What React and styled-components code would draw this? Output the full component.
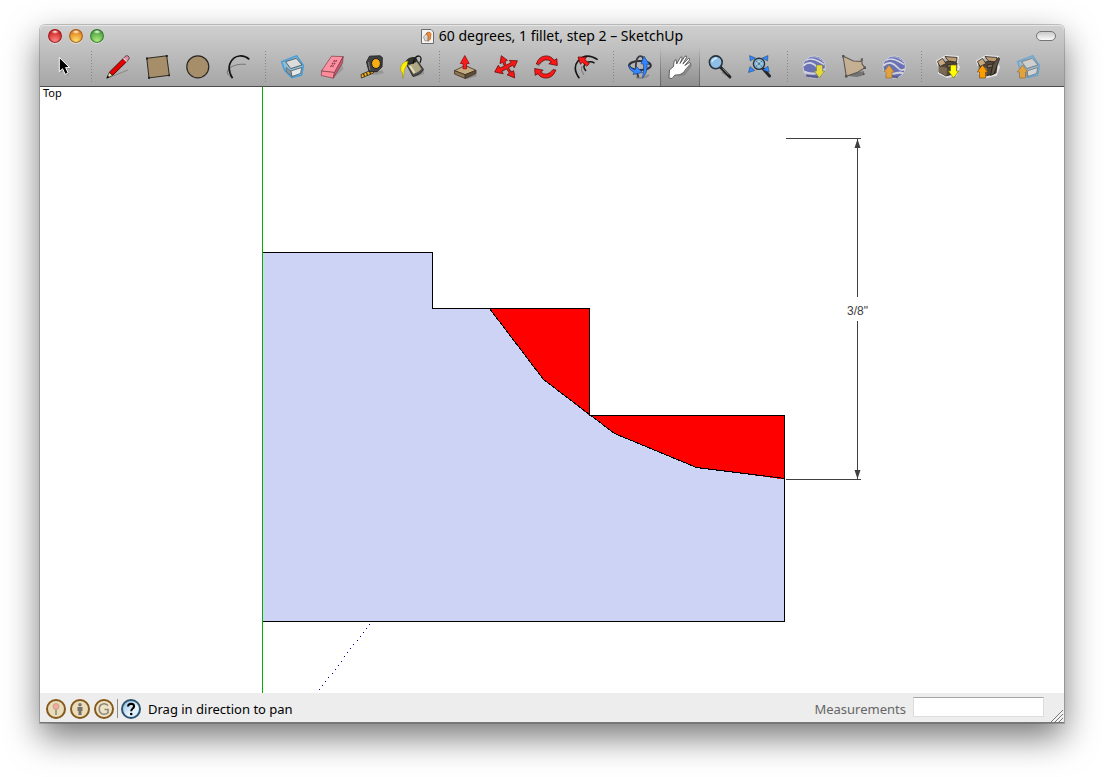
import React, { useState } from "react";
import styled, { createGlobalStyle } from "styled-components";

//icons, all of them on a 24x24 grid
const House = () => (
  <>
    <path d="M1.7 6.7L16.7 .8L23.4 10.5L21.6 20L11.7 22.6L4.5 15Z" fill="#8fbdd8" stroke="#4a9fd8" strokeWidth="1.6" />
    <path d="M10.8 16L21.8 12.5L20.5 18.5L12 21.5Z" fill="#e6e8e8" stroke="#4b5961" strokeWidth=".8" />
    <path d="M6 12.5L10.8 16L12 21.5L6.500 17Z" fill="#8b979d" stroke="#4b5961" strokeWidth=".6" />
    <path d="M5.5 6.7L16.3 3.3L22 10L10.8 13.6Z" fill="#dcdcdc" stroke="#4b5961" strokeWidth=".9" />
  </>
);

const Globe = () => (
  <>
    <circle cx="12.2" cy="12" r="11.2" fill="#4450b4" stroke="#e2e4f2" strokeWidth="1" />
    <path d="M4 5.5C9 1.5 16 6 22 9.5" stroke="#e6e8f2" strokeWidth="1.5" fill="none" />
    <path d="M9 1.8C14 1.3 19 4 22 7.5" stroke="#b9bfe0" strokeWidth="1" fill="none" />
    <path d="M1.6 10.5C7 5.5 12 8.5 15 12S20 16 23 14" stroke="#eaebf2" strokeWidth="1.8" fill="none" />
    <path d="M1.8 16.5C7 19 11 19 15 18S20 18 21 18.5" stroke="#e4e6f0" strokeWidth="2.2" fill="none" />
    <path d="M4 20.5C8 22 13 21 16 22.5" stroke="#2b2e7c" strokeWidth="1.8" fill="none" />
  </>
);

const Carton = () => (
  <>
    <path d="M1 6L10 1L22 2L21 9L23 12L20 20L11 22L3 18L3 12Z" fill="none" stroke="#e4e4e4" strokeWidth="2" />
    <path d="M3 9L13 6L21 8L20 18L10 21L3 17Z" fill="#514639" stroke="#25211c" strokeWidth=".8" />
    <path d="M3 11L11 13L10.5 21L3 17Z" fill="#7a6a51" />
    <path d="M1.5 6.5L6.5 3.5L10 8.5L4 11.5Z" fill="#c6a77e" stroke="#2a2520" strokeWidth=".8" />
    <path d="M9 1.5L21 2.5L20.5 7L12.5 6Z" fill="#bd9b70" stroke="#2a2520" strokeWidth=".8" />
    <path d="M11 10L18 9L19 11L12 13Z" fill="#857056" stroke="#2a2520" strokeWidth=".8" />
  </>
);

const ArrowDown = ({ x, fill }) => (
  <path transform={`translate(${x} 0)`} d="M-3 10H3V16H5.2L0 23L-5.2 16H-3Z" fill={fill} stroke="#6f661c" strokeWidth=".7" />
);

const ArrowUp = ({ x, fill }) => (
  <path transform={`translate(${x} 0)`} d="M-3 23H3V17H5.2L0 10L-5.2 17H-3Z" fill={fill} stroke="#7a5218" strokeWidth=".7" />
);

const icons = {
  select: (
    <>
      <path d="M8.5 4V18L12 15L14.5 20.5L17.5 19L15 14.2H19Z" fill="#777" opacity=".6" />
      <path d="M7.3 2.5V16.6L10.6 13.8L13.2 19.4L16.2 18L13.6 12.6H17.6Z" fill="#000" stroke="#fff" strokeWidth="1" />
    </>
  ),
  line: (
    <>
      <path d="M2 23L22 15" stroke="#8d8584" strokeWidth="1" />
      <path d="M3.2 17.4L17.5 3.2L20.8 6.5L6.6 20.4Z" fill="#e60000" stroke="#3b0a0a" strokeWidth=".9" />
      <path d="M3.2 17.4L6.6 20.4L.8 23.2Z" fill="#f0dca0" stroke="#222" strokeWidth=".7" />
      <path d="M.6 23.4L1.6 20.6L3.4 22.2Z" fill="#000" />
      <path d="M17.5 3.2L20 .8Q22 .3 23 2Q23.5 3.4 23 4L20.8 6.5Z" fill="#e58ca5" stroke="#4a2c35" strokeWidth=".8" />
      <path d="M17.5 3.2L20.8 6.5" stroke="#ddd" strokeWidth="1.4" />
    </>
  ),
  rectangle: (
    <>
      <path d="M.8 3.3L20.7 .8L23.3 20.3L3 22.9Z" fill="#a68e6b" stroke="#2e2a24" strokeWidth="1" />
      <path d="M0 2.4h2v2h-2zM19.8 0h2v2h-2zM22.2 19.4h1.8v1.8h-1.8zM2 21.8h2v2h-2z" fill="#222" />
    </>
  ),
  circle: <circle cx="11.8" cy="11.8" r="11" fill="#a68e6b" stroke="#2b2824" strokeWidth="1.2" />,
  arc: (
    <>
      <path d="M5 22Q-1.5 18 3 13.5Q9 8.5 20 9.3" fill="none" stroke="#777" strokeWidth="1" />
      <path d="M6.5 23.3Q1.5 15 4 8.5Q7 1.5 13.5 1Q19 .5 23.3 4.3" fill="none" stroke="#161616" strokeWidth="1.7" />
    </>
  ),
  component: <House />,
  eraser: (
    <>
      <path d="M13 23.5L23.5 14L22 9Z" fill="#909090" opacity=".7" />
      <path d="M1.5 16L11.5 1.2L23.2 1.6L14.5 17.5Z" fill="#ff92a2" stroke="#7d3e49" strokeWidth=".7" />
      <path d="M1.5 16L14.5 17.5L13.3 23.2L1.3 20.5Z" fill="#ff8b9b" stroke="#7d3e49" strokeWidth=".7" />
      <path d="M14.5 17.5L23.2 1.6L22.5 8L13.3 23.2Z" fill="#c95a6d" stroke="#7d3e49" strokeWidth=".7" />
      <path d="M10.5 12L15 4.5M12.5 12L17 4.5" stroke="#8d3c4c" strokeWidth="1.2" strokeDasharray="2 1" />
    </>
  ),
  tape: (
    <>
      <path d="M8 19L22 15L24 18L16 20Z" fill="#8c8c8c" opacity=".7" />
      <path d="M13.5 14L1 19.5L1.5 23L13.5 18Z" fill="#f5b416" stroke="#2b2b2b" strokeWidth=".8" />
      <path d="M3.5 18.5L4.5 21.5M6.5 17.3L7.5 20.3M9.5 16L10.5 19" stroke="#33290a" strokeWidth="1.1" />
      <path d="M6.5 7L9.5 1.2L20 .8L22.3 2.5L22 12L17 16.7H9Z" fill="#404144" stroke="#1d1e20" strokeWidth=".9" />
      <path d="M8.5 7L10 15" stroke="#76787a" strokeWidth="1.2" />
      <ellipse cx="16" cy="8.5" rx="4.4" ry="5" fill="#f6ae14" stroke="#1a1a1a" strokeWidth="1" />
    </>
  ),
  paint: (
    <>
      <path d="M14 22L25 19L23 15Z" fill="#8a8a8a" opacity=".7" />
      <path d="M5.5 7.5L16 4L23.5 14.500Q21 19.500 13 21.5Z" fill="#4e4f4b" stroke="#222" strokeWidth=".9" />
      <path d="M8 10.5L17 7L21.500 14Q19 17 13.500 19Z" fill="#b0a883" />
      <path d="M10 11L14.5 18" stroke="#e4ddbd" strokeWidth="2" />
      <path d="M5.5 7.5Q7 3 13 2.500Q18 2.500 16 6Q10 10.500 5.5 7.5Z" fill="#34352e" stroke="#1c1c1c" strokeWidth=".8" />
      <path d="M13 9Q14 1 19 1Q22.5 2 20 8" stroke="#171717" strokeWidth="1.3" fill="none" />
      <path d="M8 6Q2.5 6.5 .8 12Q-.2 16 2.5 18L2.7 23.5L4.2 18.5Q3.8 15 5.500 12.5Q7.500 10 8 6Z" fill="#ffef00" stroke="#8b7f13" strokeWidth=".5" />
    </>
  ),
  pushpull: (
    <>
      <path d="M11 23L22.5 19.5V21L13 24Z" fill="#888" />
      <path d="M.5 15.7L11 10.5L22 15.3L11.2 19.7Z" fill="#c6aa80" stroke="#3d3226" strokeWidth=".8" />
      <path d="M.5 15.7L11.2 19.7V23.5L.5 19Z" fill="#8f7654" stroke="#3d3226" strokeWidth=".8" />
      <path d="M22 15.3L11.2 19.7V23.5L22 18.6Z" fill="#5e4c38" stroke="#3d3226" strokeWidth=".8" />
      <path d="M10.8 .5L15.2 8.5H12.6V13.8H9V8.5H6.3Z" fill="#ff1a1a" stroke="#7d0b0b" strokeWidth=".7" />
    </>
  ),
  move: (
    <>
      <path d="M9 9L21 20M5 18L20 9" stroke="#777" strokeWidth="2" opacity=".6" />
      <path d="M7.3 .7L13.4 5.3L10.8 6.5L12.2 10.2L17 7.6L15.4 5.4L23.4 5.8L20.2 12.8L18.8 10.2L14.3 12.6L17 17L19.7 15.8L20.7 22.9L13 19.8L15.4 18.2L12.6 13.8L7.7 16.3L9.3 18.8L.7 17L4.3 10.3L6 13L10.6 10.9L8.7 7.4L6 8.6Z" fill="#f91717" stroke="#6d0d0d" strokeWidth=".8" />
    </>
  ),
  rotate: (
    <>
      <path d="M4 11Q12 -1 21 8.5M22 15Q13 28 4 17" fill="none" stroke="#777" strokeWidth="2" opacity=".6" />
      <path d="M2.3 9Q5 1 12 .9Q17.5 1 20 5.3L22.8 3.7L23.3 10.5L14.8 8.8L17.5 7Q11 1.500 5 9.4Z" fill="#ff1717" stroke="#650e0e" strokeWidth=".8" />
      <path d="M21.7 15Q19 23 12 23.1Q6.5 23 4 18.7L1.2 20.3L.7 13.5L9.2 15.2L6.5 17Q13 22.500 19 14.6Z" fill="#ff1717" stroke="#650e0e" strokeWidth=".8" />
    </>
  ),
  offset: (
    <>
      <path d="M5.3 23.3Q-2 13 4 6Q12 -3 23.7 4.7" fill="none" stroke="#151515" strokeWidth="1.6" />
      <path d="M12 16Q7.5 11 12.5 8Q16 5.5 20.5 8" fill="none" stroke="#151515" strokeWidth="1.5" />
      <path d="M10 20Q6 15 8 11" fill="none" stroke="#777" strokeWidth="1" />
      <path d="M4 2L12.5 2.3L10.8 4.5L15.3 8.5L12.8 11.2L8.3 7.2L6.5 9.3Z" fill="#ff1717" stroke="#650e0e" strokeWidth=".8" />
    </>
  ),
  orbit: (
    <>
      <path d="M8 22Q14 25 21 20" stroke="#8b8b8b" strokeWidth="2" fill="none" />
      <ellipse cx="12" cy="10.5" rx="10.8" ry="4.6" fill="none" stroke="#303236" strokeWidth="2" />
      <path d="M10.5 22.5Q6 12 9 4Q11 0 14 1.5Q15.5 3 15.5 7" fill="none" stroke="#3a3c40" strokeWidth="1.8" />
      <path d="M1 9Q1.5 13 7 14.8L8.5 11.5L14.5 17.5L5 19.5L6 17.2Q0 15 1 9Z" fill="#3386ff" stroke="#173b79" strokeWidth=".6" />
      <path d="M16 1L21.3 9.5L19 9.3Q19.8 18 14.5 22.8Q16 17 15.5 9L13 8.8Z" fill="#3386ff" stroke="#173b79" strokeWidth=".6" />
    </>
  ),
  pan: (
    <>
      <path d="M9 22L18 16L23 8L24 11L17 20Z" fill="#777" opacity=".6" />
      <path d="M1 23L1.5 15L5.5 11.5L6.2 6L8 4.5L8.7 9L12.5 2.3Q14.5 1 14 3.5L12 8.5L17 1.2Q19 .3 18.4 2.5L14.8 9L20.4 3.5Q22.3 3 21.3 5.2L16.8 10.5L21.3 7.6Q23.3 7.5 22 9.5Q18 13.5 15.5 17.5Q12.5 20.5 7 20L4 23.5Z" fill="#fff" stroke="#333" strokeWidth=".7" />
    </>
  ),
  zoom: (
    <>
      <path d="M14 17L23 23" stroke="#858585" strokeWidth="2" />
      <path d="M12.3 12L21.8 21.8" stroke="#202326" strokeWidth="3" strokeLinecap="round" />
      <path d="M14.5 13.5L20.5 19.5" stroke="#777b7d" strokeWidth="1" />
      <circle cx="7.8" cy="7.3" r="6.4" fill="#8fbfe6" stroke="#28323c" strokeWidth="1.6" />
      <path d="M3.8 7Q5 3.5 9 3.3" fill="none" stroke="#d9edfa" strokeWidth="1.5" />
    </>
  ),
  extents: (
    <>
      <path d="M15 13.5L21.5 21" stroke="#24272b" strokeWidth="3" strokeLinecap="round" />
      <circle cx="11" cy="8.8" r="5.6" fill="#8bb8d5" stroke="#28323c" strokeWidth="1.4" />
      <path d="M8 6L14 11.5M14 6L8 11.5" stroke="#3f6f91" strokeWidth="1" />
      <path d="M8 8.7L11 6L14 8.7L11 11.5Z" fill="none" stroke="#c6e4f4" strokeWidth=".7" />
      <path d="M1.6 .6L7.4 3L2.2 6ZM20 .6L14.3 3L19.5 6ZM.5 17.5L2 11.5L6.8 15.5ZM21.2 17.2L20 11.2L15 14.8Z" fill="#3188ff" stroke="#174077" strokeWidth=".5" />
    </>
  ),
  location: (
    <>
      <Globe />
      <ArrowDown x={17.5} fill="#fff100" />
    </>
  ),
  terrain: (
    <>
      <path d="M6 21L13 18L22 16V20L15 22Z" fill="#555" />
      <path d="M1 1L11.3 6L18.5 6.5L20 4.5L20 9L23 12.7L15.7 17.3L4.3 21.3Z" fill="#d0ae82" stroke="#2c2720" strokeWidth="1.1" />
      <path d="M0 0h2.5v2.5h-2.5zM3 20h2.5v2.5h-2.5zM21.5 11.5h2.5v2.5h-2.5zM18.8 3.5h2v2h-2zM21 18h1.5v2h-1.5z" fill="#2c2720" />
    </>
  ),
  upload: (
    <>
      <Globe />
      <ArrowUp x={7} fill="#ff9c00" />
    </>
  ),
  getModels: (
    <>
      <Carton />
      <ArrowDown x={17.5} fill="#ffff00" />
    </>
  ),
  shareModel: (
    <>
      <Carton />
      <path d="M17 9L22.5 2.5L23.5 4L18 19L14.5 20.5Z" fill="#5e5240" stroke="#211d18" strokeWidth=".8" />
      <ArrowUp x={6.5} fill="#ff9c00" />
    </>
  ),
  shareComponent: (
    <>
      <House />
      <ArrowUp x={6.5} fill="#ff9c00" />
    </>
  ),
};

//toolbar groups, every group after the first one starts with a separator
const groups = [
  [{ id: "select", label: "Select" }],
  [
    { id: "line", label: "Line" },
    { id: "rectangle", label: "Rectangle" },
    { id: "circle", label: "Circle" },
    { id: "arc", label: "Arc" },
  ],
  [
    { id: "component", label: "Make Component" },
    { id: "eraser", label: "Eraser" },
    { id: "tape", label: "Tape Measure" },
    { id: "paint", label: "Paint Bucket" },
  ],
  [
    { id: "pushpull", label: "Push/Pull" },
    { id: "move", label: "Move" },
    { id: "rotate", label: "Rotate" },
    { id: "offset", label: "Offset" },
  ],
  [
    { id: "orbit", label: "Orbit" },
    { id: "pan", label: "Pan" },
    { id: "zoom", label: "Zoom" },
    { id: "extents", label: "Zoom Extents" },
  ],
  [
    { id: "location", label: "Add Location", dimmed: true },
    { id: "terrain", label: "Toggle Terrain", dimmed: true },
    { id: "upload", label: "Preview in Google Earth", dimmed: true },
  ],
  [
    { id: "getModels", label: "Get Models" },
    { id: "shareModel", label: "Share Model" },
    { id: "shareComponent", label: "Share Component", dimmed: true },
  ],
];

//guide line, one dot per step
const dots = Array.from({ length: 17 }, (_, i) => ({
  x: Math.round(369 - i * 3.12),
  y: Math.round(624 + i * 4.06),
}));

const Drawing = () => (
  <Sheet viewBox="40 87 1024 606" preserveAspectRatio="xMinYMin meet">
    <g shapeRendering="crispEdges">
      <path d="M262.5 252.5H432.5V308.5H489.5L543.5 379.5L590.5 415.5L614.5 433.5L696.5 467.5L784.5 479.5V621.5H262.5Z" fill="#ccd3f5" />
      <path d="M489.5 308.5H589.5V415.5L543.5 379.5Z" fill="#f00" />
      <path d="M590.5 415.5H784.5V479.5L696.5 467.5L614.5 433.5Z" fill="#f00" />
      <path d="M489.5 308.5L543.5 379.5L614.5 433.5L696.5 467.5L784.5 478.5" fill="none" stroke="#000" />
      <path d="M262.5 252.5H432.5V308.5H589.5V415.5H784.5V621.5H262.5" fill="none" stroke="#000" />
      <path d="M262.5 87V693" stroke="#00b000" />
      {dots.map(({ x, y }) => (
        <rect key={y} x={x} y={y} width="1" height="1" fill="#00008c" />
      ))}
      <g fill="none" stroke="#404040">
        <path d="M786 138.5H861M786 479.5H861" />
        <path d="M857.5 139V297M857.5 321V479" />
      </g>
    </g>
    <path d="M857.5 139L860.5 148H854.5ZM857.5 479L860.5 470H854.5Z" fill="#404040" />
    <DimensionText x="857.5" y="315">
      3/8"
    </DimensionText>
  </Sheet>
);

const App = () => {
  //state
  const [tool, setTool] = useState("pan");
  const [measure, setMeasure] = useState("");
  return (
    <Desktop>
      <GlobalStyle />
      <Window>
        <Header>
          <TitleBar>
            <Lights>
              <Light type="button" aria-label="Close" $edge="#8f1a1a" $from="#c9181b" $to="#ff8f8a" />
              <Light type="button" aria-label="Minimize" $edge="#98571a" $from="#de7413" $to="#ffe873" />
              <Light type="button" aria-label="Zoom window" $edge="#32702a" $from="#3f9a35" $to="#b5f085" />
            </Lights>
            <Title>
              <svg width="13" height="15" viewBox="0 0 13 15" aria-hidden="true">
                <path d="M.5 .5H10L12.5 3V14.5H.5Z" fill="#f4f4f2" stroke="#6b6b6b" />
                <path d="M2.5 8L6.5 3L7 11.5L4 12Z" fill="#d8d8d8" stroke="#777" strokeWidth=".6" />
                <path d="M5 5Q8 1.5 10 4.5L9.5 10L7 12.5L7.5 7Z" fill="#ef8a35" stroke="#a8541a" strokeWidth=".6" />
              </svg>
              60 degrees, 1 fillet, step 2 – SketchUp
            </Title>
            <Pill type="button" aria-label="Toggle toolbar" />
          </TitleBar>
          <Toolbar>
            {groups.map((group, index) => (
              <Group key={index}>
                {group.map(({ id, label, dimmed }) => (
                  <Tool
                    type="button"
                    key={id}
                    aria-label={label}
                    $active={tool === id}
                    $dimmed={dimmed}
                    onClick={() => setTool(id)}
                  >
                    <svg width="24" height="24" viewBox="0 0 24 24" fill="none">
                      {icons[id]}
                    </svg>
                  </Tool>
                ))}
              </Group>
            ))}
          </Toolbar>
        </Header>
        <Canvas>
          <ViewName>Top</ViewName>
          <Drawing />
        </Canvas>
        <StatusBar>
          <Badge type="button" aria-label="Geo-location">
            <svg width="20" height="20" viewBox="0 0 20 20">
              <circle cx="10" cy="10" r="9" fill="#e9dcb9" stroke="#85591b" strokeWidth="2" />
              <path d="M10 9V16" stroke="#8d8878" strokeWidth="1.5" />
              <circle cx="10" cy="7.5" r="3" fill="#f3aa9c" stroke="#b5958a" strokeWidth=".7" />
            </svg>
          </Badge>
          <Badge type="button" aria-label="Claim credit">
            <svg width="20" height="20" viewBox="0 0 20 20">
              <circle cx="10" cy="10" r="9" fill="#e9dcb9" stroke="#85591b" strokeWidth="2" />
              <circle cx="10" cy="5.8" r="1.7" fill="#77736a" />
              <path d="M7.5 8H12.5V12H11.5V16H8.5V12H7.5Z" fill="#77736a" />
            </svg>
          </Badge>
          <Badge type="button" aria-label="Sign in">
            <svg width="20" height="20" viewBox="0 0 20 20">
              <circle cx="10" cy="10" r="9" fill="#eee3c6" stroke="#85591b" strokeWidth="2" />
              <path d="M14 6.5Q12 4.5 9.8 4.7Q5.2 5.3 5.2 10Q5.5 15 10 15.3Q12.5 15.3 14 13.8V10.5H10.5" fill="none" stroke="#8b8779" strokeWidth="1.6" />
            </svg>
          </Badge>
          <Divider />
          <Badge type="button" aria-label="Help">
            <svg width="20" height="20" viewBox="0 0 20 20">
              <defs>
                <linearGradient id="help" x1="0" y1="0" x2="1" y2="1">
                  <stop offset="0" stopColor="#88b4da" />
                  <stop offset=".6" stopColor="#eaf6ff" />
                  <stop offset="1" stopColor="#c5e4f8" />
                </linearGradient>
              </defs>
              <circle cx="10" cy="10" r="9" fill="url(#help)" stroke="#2b5470" strokeWidth="2" />
              <path d="M7 7.5Q7.2 4.7 10.2 4.7Q13.2 4.9 13.1 7.5Q12.9 8.8 11.5 9.7Q10.2 10.6 10.2 12.3" fill="none" stroke="#000" strokeWidth="2" />
              <circle cx="10.2" cy="15" r="1.3" />
            </svg>
          </Badge>
          <Hint>Drag in direction to pan</Hint>
          <MeasureLabel htmlFor="measurements">Measurements</MeasureLabel>
          <MeasureInput
            id="measurements"
            type="text"
            value={measure}
            onChange={(e) => setMeasure(e.target.value)}
          />
          <Grip viewBox="0 0 12 12" aria-hidden="true">
            <path d="M0 12L12 0M4 12L12 4M8 12L12 8" stroke="#777" />
            <path d="M1.5 12L12 1.5M5.5 12L12 5.5M9.5 12L12 9.5" stroke="#fff" strokeWidth=".7" />
          </Grip>
        </StatusBar>
      </Window>
    </Desktop>
  );
};

const GlobalStyle = createGlobalStyle`
  * {
    box-sizing: border-box;
  }
  body {
    margin: 0;
    background: #fff;
    font-family: "Lucida Grande", "Noto Sans", sans-serif;
    font-size: 13px;
    line-height: 18px;
    color: #000;
  }
  button {
    padding: 0;
    border: none;
    background: none;
  }
`;

const Desktop = styled.div`
  display: flex;
  min-height: 100vh;
  padding: 25px 40px 54px;
  overflow: hidden;
`;

const Window = styled.main`
  display: flex;
  flex: 1;
  flex-direction: column;
  min-width: 0;
  border-radius: 5px 5px 0 0;
  box-shadow: 0 0 0 1px rgba(0, 0, 0, 0.2), 0 14px 34px rgba(0, 0, 0, 0.54);
`;

const Header = styled.header`
  border-bottom: 1px solid #4c4c4c;
  border-radius: 5px 5px 0 0;
  background: linear-gradient(#d0d0d0, #a6a6a6);
  box-shadow: inset 0 1px #e6e6e6;
`;

const TitleBar = styled.div`
  display: grid;
  grid-template-columns: 1fr auto 1fr;
  align-items: center;
  height: 22px;
  padding: 0 8px;
`;

const Lights = styled.div`
  display: flex;
  gap: 7px;
`;

const Light = styled.button`
  width: 14px;
  height: 14px;
  border-radius: 50%;
  background: radial-gradient(ellipse 4px 2px at 50% 20%, #fff, transparent),
    radial-gradient(circle at 50% 90%, ${({ $to }) => $to}, ${({ $from }) => $from} 80%);
  box-shadow: inset 0 0 1px 1px ${({ $edge }) => $edge}, 0 1px #ddd;
`;

const Title = styled.h1`
  display: flex;
  align-items: center;
  gap: 5px;
  margin: 0;
  font-size: 14px;
  font-weight: 400;
  line-height: 22px;
`;

const Pill = styled.button`
  justify-self: end;
  width: 20px;
  height: 10px;
  border: 1px solid #747474;
  border-radius: 5px;
  background: linear-gradient(#c9c9c9, #fafafa);
`;

const Toolbar = styled.nav`
  display: flex;
  height: 39px;
  padding: 0 4px;
`;

const Group = styled.div`
  display: flex;
  & + &::before {
    content: "";
    width: 1px;
    height: 32px;
    margin: 4px 6px 0 7px;
    background: repeating-linear-gradient(#858585 0 1px, transparent 1px 3px);
  }
`;

const Tool = styled.button`
  display: flex;
  align-items: center;
  justify-content: center;
  width: 40px;
  border: solid transparent;
  border-width: 0 1px;
  ${({ $active }) =>
    $active &&
    `
    border-image: linear-gradient(transparent, #666) 1;
    background: linear-gradient(transparent, rgba(0, 0, 0, 0.14));
  `}
  svg {
    opacity: ${({ $dimmed }) => ($dimmed ? 0.65 : 1)};
  }
`;

const Canvas = styled.section`
  display: flex;
  flex: 1;
  position: relative;
  min-height: 0;
  background: #fff;
`;

const ViewName = styled.span`
  position: absolute;
  top: 0;
  left: 3px;
  font-size: 11px;
  line-height: 12px;
`;

const Sheet = styled.svg`
  flex: 1;
  min-width: 0;
`;

const DimensionText = styled.text`
  fill: #404040;
  font-family: "Liberation Sans", sans-serif;
  font-size: 12px;
  text-anchor: middle;
`;

const StatusBar = styled.footer`
  display: flex;
  align-items: center;
  position: relative;
  gap: 4px;
  height: 30px;
  padding: 2px 20px 0 6px;
  border-bottom: 1px solid #777;
  background: #ededed;
`;

const Badge = styled.button`
  width: 20px;
  height: 20px;
  svg {
    display: block;
  }
`;

const Divider = styled.span`
  width: 1px;
  height: 19px;
  margin: 0 -1px;
  background: #8a8a8a;
`;

const Hint = styled.p`
  flex: 1;
  margin: 0 0 0 3px;
`;

const MeasureLabel = styled.label`
  color: #666;
`;

const MeasureInput = styled.input`
  width: 131px;
  height: 20px;
  margin: 0 0 4px 3px;
  padding: 0 4px;
  border: 1px solid #dcdcdc;
  border-top-color: #a5a5a5;
  background: #fff;
  font: inherit;
  outline: none;
`;

const Grip = styled.svg`
  position: absolute;
  right: 1px;
  bottom: 0;
  width: 12px;
  height: 12px;
`;

export default App;
